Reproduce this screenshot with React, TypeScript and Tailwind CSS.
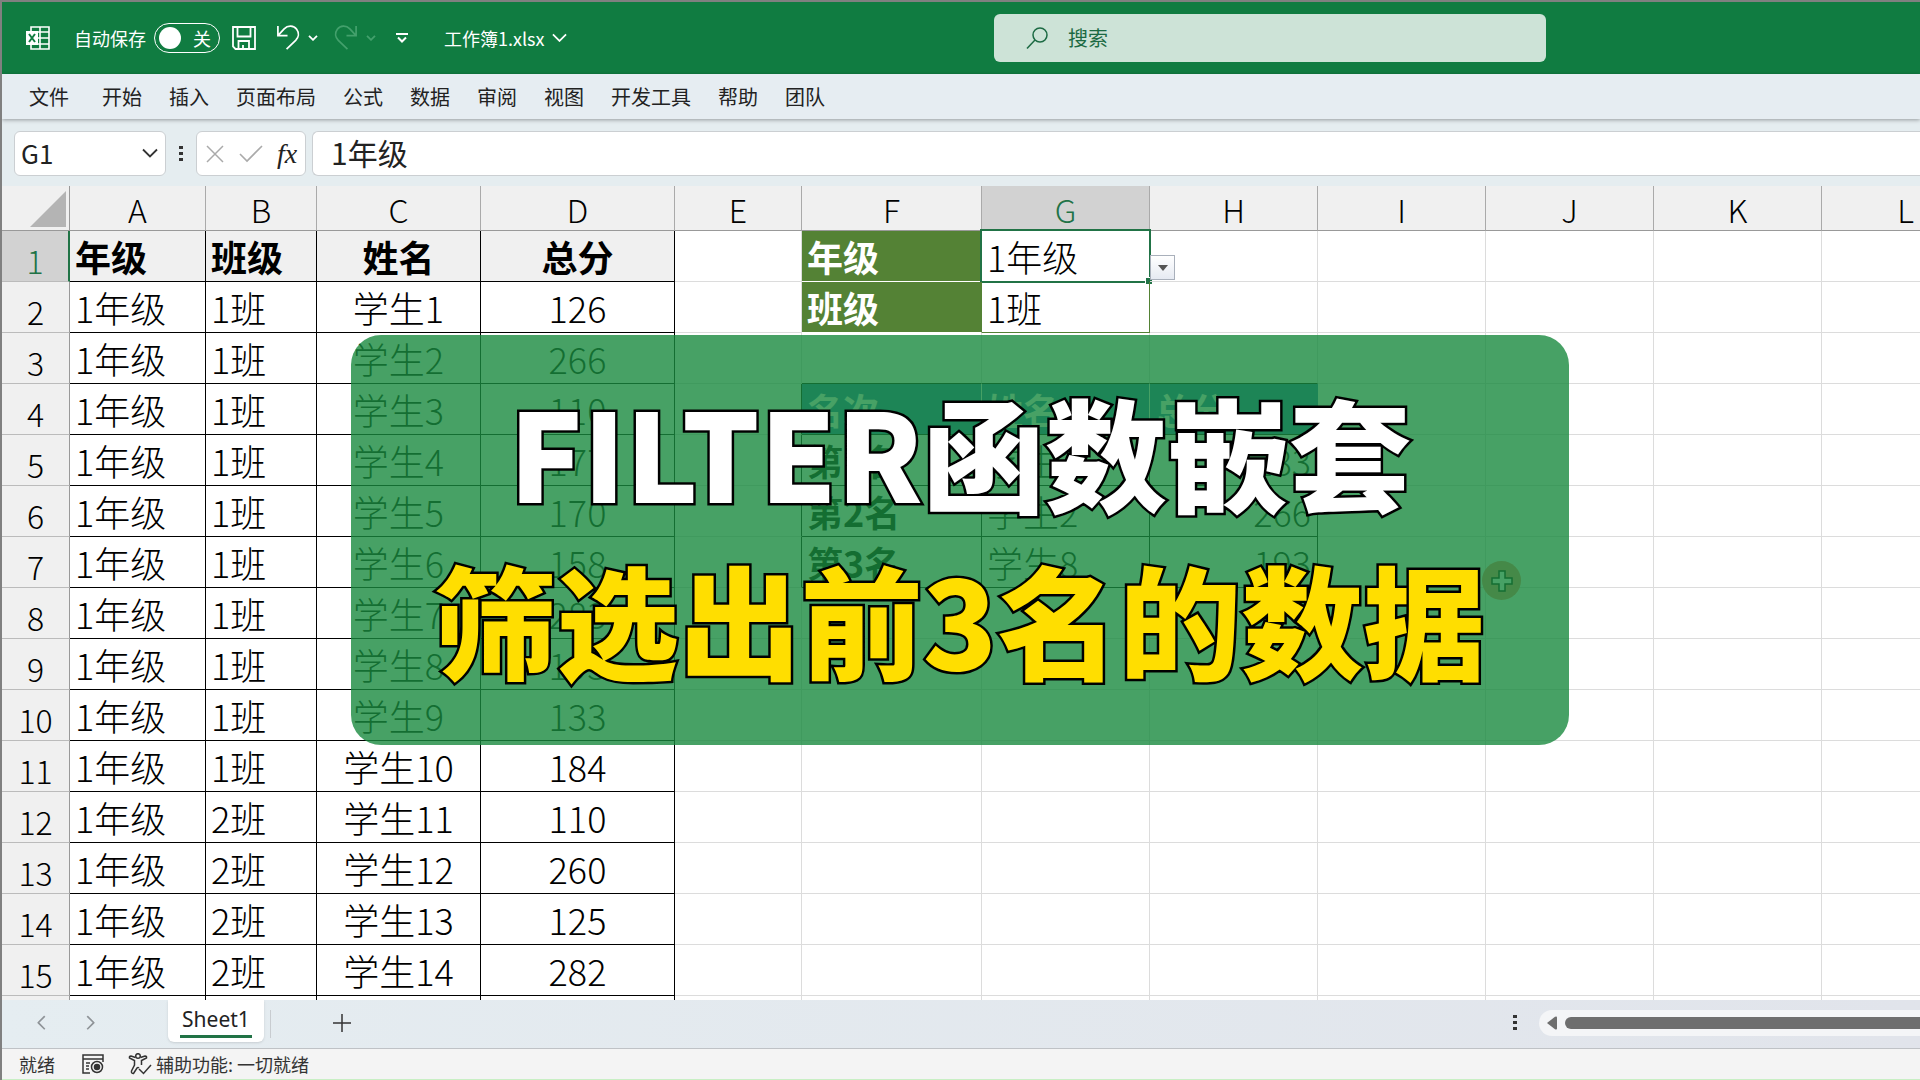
import React from "react";

const menuItems = ["开始", "插入", "页面布局", "公式", "数据", "审阅", "视图", "开发工具", "帮助", "团队"];
const columns = ["A", "B", "C", "D", "E", "F", "G", "H", "I", "J", "K", "L"];

const students = [
	["1年级", "1班", "学生1", "126"],
	["1年级", "1班", "学生2", "266"],
	["1年级", "1班", "学生3", "110"],
	["1年级", "1班", "学生4", "177"],
	["1年级", "1班", "学生5", "170"],
	["1年级", "1班", "学生6", "158"],
	["1年级", "1班", "学生7", "283"],
	["1年级", "1班", "学生8", "193"],
	["1年级", "1班", "学生9", "133"],
	["1年级", "1班", "学生10", "184"],
	["1年级", "2班", "学生11", "110"],
	["1年级", "2班", "学生12", "260"],
	["1年级", "2班", "学生13", "125"],
	["1年级", "2班", "学生14", "282"],
	["", "", "", ""],
];

const ranking: Record<number, string[]> = {
	5: ["第1名", "学生7", "283"],
	6: ["第2名", "学生2", "266"],
	7: ["第3名", "学生8", "193"],
};

type IconProps = { className?: string };

const ChevronDown: React.FC<IconProps> = ({ className }) => (
	<svg viewBox="0 0 16 10" className={className} fill="none" stroke="currentColor" strokeWidth="1.8">
		<path d="M1 1.5 8 8.5 15 1.5" />
	</svg>
);

const SmallChevron = () => (
	<svg viewBox="0 0 10 6" className="h-[6px] w-[10px]" fill="none" stroke="currentColor" strokeWidth="1.8">
		<path d="m1 .8 4 4 4-4" />
	</svg>
);

const ExcelIcon = () => (
	<svg viewBox="0 0 24 24" className="size-6 text-white" fill="none" stroke="currentColor" strokeWidth="1.6">
		<path d="M5 5V1h18v22H5v-4M14 1v22M5 6h18M12 12h11M5 18h18" />
		<path d="M0 5h12v14H0z" fill="currentColor" stroke="none" />
		<path d="m3 8 6 8M9 8l-6 8" stroke="#107c41" strokeWidth="2" />
	</svg>
);

const SaveIcon = () => (
	<svg viewBox="0 0 24 24" className="size-6" fill="none" stroke="currentColor" strokeWidth="1.8">
		<path d="M1 1h22v22H3.500L1 20.500z" />
		<path d="M5.500 1v9.500h13V1M6.500 23v-8h10.500v8M11 23v-4" />
	</svg>
);

const UndoIcon: React.FC<IconProps> = ({ className }) => (
	<svg viewBox="0 0 24 26" className={className} fill="none" stroke="currentColor" strokeWidth="1.8">
		<path d="M1.500 1v10h10M2 10.500 8 4C12 0 18 .5 21 4.500s2 8.500-1 11.500L10.500 25" />
	</svg>
);

const MoreDots = () => (
	<svg viewBox="0 0 4 16" className="h-4 w-1 shrink-0 text-[#333]" fill="currentColor">
		<path d="M0 0h4v3H0zM0 6h4v3H0zM0 12h4v3H0z" />
	</svg>
);

const TitleBar = () => (
	<header className="relative flex h-[72px] items-center bg-[#107c41] pb-px pl-6 text-lg text-white">
		<ExcelIcon />
		<label htmlFor="autosave" className="ml-6">自动保存</label>
		<button id="autosave" role="switch" aria-checked="false" className="ml-2 flex h-[30px] w-[66px] items-center justify-between rounded-full border border-white pl-1 pr-2">
			<span className="size-[22px] rounded-full bg-white"></span>
			关
		</button>
		<button aria-label="保存" className="ml-3"><SaveIcon /></button>
		<button aria-label="撤消" className="ml-5 flex items-center gap-2">
			<UndoIcon className="h-[25px] w-6" />
			<SmallChevron />
		</button>
		<button aria-label="恢复" className="ml-4 flex items-center gap-2 text-[#43a06c]">
			<UndoIcon className="h-[25px] w-6 -scale-x-100" />
			<SmallChevron />
		</button>
		<button aria-label="自定义" className="ml-5">
			<svg viewBox="0 0 12 10" className="h-[10px] w-3" fill="none" stroke="currentColor" strokeWidth="2">
				<path d="M0 1h12M2 4.500l4 4 4-4" />
			</svg>
		</button>
		<button className="ml-9 flex items-center gap-2">
			工作簿1.xlsx
			<ChevronDown className="w-[15px]" />
		</button>
		<div className="absolute left-1/2 ml-[33px] flex h-12 w-[552px] items-center gap-5 rounded-md bg-[#cde3d7] pl-8 text-xl text-[#1c6a43]">
			<svg viewBox="0 0 22 22" className="size-[22px] shrink-0" fill="none" stroke="currentColor" strokeWidth="1.5">
				<circle cx="14" cy="8" r="7" />
				<path d="M9 13 1 21.500" />
			</svg>
			<input aria-label="搜索" placeholder="搜索" className="w-full bg-transparent outline-none placeholder:text-[#1c6a43]" />
		</div>
	</header>
);

const MenuBar = () => (
	<nav className="relative flex h-[45px] items-center gap-[27px] bg-[#e6edf2] pl-[27px] text-xl text-[#222] shadow-[0_1px_4px_rgba(0,0,0,0.35)]">
		<button className="mr-[6px]">文件</button>
		{menuItems.map((item) => (
			<button key={item}>{item}</button>
		))}
	</nav>
);

const FormulaBar = () => (
	<div className="flex h-[67px] items-start bg-[#e5edf0] pl-3 pt-3">
		<div className="flex h-[45px] w-[152px] shrink-0 items-center rounded-md border border-[#cbcfd2] bg-white pr-[7px] pb-[2px] pl-[6px]">
			<input aria-label="名称框" defaultValue="G1" className="w-full min-w-0 text-[26px] leading-10 text-[#222] outline-none" />
			<ChevronDown className="w-4 shrink-0 text-[#333]" />
		</div>
		<div className="flex h-[45px] w-[30px] shrink-0 items-center justify-center"><MoreDots /></div>
		<div className="flex h-[45px] w-[110px] shrink-0 items-center rounded-md border border-[#cbcfd2] bg-white pl-[9px]">
			<svg viewBox="0 0 18 18" className="size-[18px] text-[#aaa]" fill="none" stroke="currentColor" strokeWidth="1.5">
				<path d="m1 1 16 16M17 1 1 17" />
			</svg>
			<svg viewBox="0 0 24 18" className="ml-[15px] h-[18px] w-6 text-[#aaa]" fill="none" stroke="currentColor" strokeWidth="1.6">
				<path d="m1 9 7 7L23 1" />
			</svg>
			<button aria-label="插入函数" className="ml-[14px] font-['Liberation_Serif',serif] text-[28px] leading-8 italic text-[#222]">fx</button>
		</div>
		<div className="ml-[6px] flex h-[45px] grow items-center rounded-l-md border border-r-0 border-[#cbcfd2] bg-white pb-[3px] pl-[18px]">
			<input aria-label="编辑栏" defaultValue="1年级" className="w-full text-[30px] leading-10 text-[#222] outline-none" />
		</div>
	</div>
);

const cellClass = (row: number, col: string) => {
	if ("ABCD".includes(col)) {
		const align = col === "A" || col === "B" ? "pl-[5px]" : "text-center";
		return `border-black ${align} ${row === 1 ? "bg-[#f0f0f0] font-bold" : ""}`;
	}
	if (col === "F" && row <= 2) return "bg-[#548235] border-r-[#548235] border-b-white pl-[5px] font-bold text-white";
	if (col === "G" && row <= 2) return "border-[#548235] pl-[5px]";
	if ("FGH".includes(col) && row === 4) {
		return `bg-[#2e75b6] border-b-black pl-[5px] font-bold text-white ${col === "H" ? "border-r-[#2e75b6]" : "border-r-white"}`;
	}
	if ("FGH".includes(col) && row >= 5 && row <= 7) {
		return `border-black ${col === "F" ? "pl-[5px] font-bold" : col === "G" ? "pl-[5px]" : "pr-[6px] text-right"}`;
	}
	if (col === "E" && row >= 4 && row <= 7) return "border-r-black border-b-[#dcdcdc]";
	if ("FGH".includes(col) && row === 3) return "border-b-black border-r-[#dcdcdc]";
	return "border-[#dcdcdc]";
};

const cellText = (row: number, col: string) => {
	const i = columns.indexOf(col);
	if (i < 4) return row === 1 ? ["年级", "班级", "姓名", "总分"][i] : students[row - 2][i];
	if (row === 1) return { F: "年级", G: "1年级" }[col] ?? "";
	if (row === 2) return { F: "班级", G: "1班" }[col] ?? "";
	if (row === 4) return { F: "名次", G: "姓名", H: "总分" }[col] ?? "";
	return ranking[row]?.[i - 5] ?? "";
};

const Selection = () => (
	<>
		<span className="absolute -inset-[2px] border-2 border-[#217346]"></span>
		<span className="absolute -right-[3px] -bottom-[3px] size-[6px] bg-[#217346] outline outline-white"></span>
		<button aria-label="选择" className="absolute -right-[26px] bottom-px flex h-[25px] w-[25px] items-center justify-center border border-[#a9b0bb] bg-linear-to-b from-white to-[#e6eaf2]">
			<svg viewBox="0 0 10 6" className="h-[6px] w-[10px]" fill="#555"><path d="M0 0h10L5 6z" /></svg>
		</button>
	</>
);

const Sheet = () => (
	<div className="h-[814px] overflow-hidden bg-white">
		<table className="w-[1988px] table-fixed border-separate border-spacing-0 text-4xl leading-[44px] font-light text-black">
			<colgroup>
				<col className="w-[68px]" />
				<col className="w-[136px]" />
				<col className="w-[111px]" />
				<col className="w-[164px]" />
				<col className="w-[194px]" />
				<col className="w-[127px]" />
				<col className="w-[180px]" />
				<col className="w-[168px]" span={6} />
			</colgroup>
			<thead>
				<tr className="h-[45px] text-[32px] leading-10">
					<th className="border-r border-b border-[#999] bg-[#f0f0f0] p-0">
						<svg viewBox="0 0 36 36" className="mt-px mr-[3px] ml-auto size-9" fill="#b4b4b4"><path d="M36 0v36H0z" /></svg>
					</th>
					{columns.map((col) => (
						<th key={col} className={`border-r border-b border-[#aaa] border-b-[#999] p-0 pt-px font-light ${col === "G" ? "bg-[#d2d2d2] text-[#217346]" : "bg-[#f0f0f0]"}`}>
							{col}
						</th>
					))}
				</tr>
			</thead>
			<tbody>
				{students.concat([[]]).map((_, index) => {
					const row = index + 1;
					return (
						<tr key={row} className="h-[51px]">
							<th className={`border-b p-0 pt-2 text-[32px] leading-10 font-light ${row === 1 ? "border-r-2 border-[#bbb] border-r-[#217346] bg-[#d2d2d2] text-[#217346]" : "border-r border-[#bbb] border-r-[#999] bg-[#f0f0f0]"}`}>
								{row < 16 ? row : ""}
							</th>
							{columns.map((col) => (
								<td key={col} className={`relative border-r border-b p-0 whitespace-nowrap ${cellClass(row, col)}`}>
									{row < 16 ? cellText(row, col) : ""}
									{row === 1 && col === "G" && <Selection />}
								</td>
							))}
						</tr>
					);
				})}
			</tbody>
		</table>
	</div>
);

const SheetTabs = () => (
	<div className="flex h-[49px] items-start border-b border-[#bfc2c6] bg-linear-to-r from-[#e5edf1] to-[#e1e4eb]">
		<div className="flex h-[46px] w-[166px] shrink-0 items-center gap-[34px] pl-8 text-[#8f9498]">
			<button aria-label="上一个"><ChevronDown className="w-[15px] rotate-90" /></button>
			<button aria-label="下一个"><ChevronDown className="w-[15px] -rotate-90" /></button>
		</div>
		<button className="flex h-[42px] w-24 flex-col items-center rounded-b-md bg-white pt-1 font-['Noto_Sans',sans-serif] text-[21px] leading-[30px] text-[#222] shadow-sm">
			Sheet1
			<span className="mt-px h-[3px] w-[72px] bg-[#217346]"></span>
		</button>
		<span className="mt-[10px] ml-[6px] h-7 w-px bg-[#c8ccd0]"></span>
		<button aria-label="新工作表" className="mt-[14px] ml-[62px] text-[#333]">
			<svg viewBox="0 0 18 18" className="size-[18px]" fill="none" stroke="currentColor" strokeWidth="1.5"><path d="M9 0v18M0 9h18" /></svg>
		</button>
		<div className="ml-auto flex h-[46px] items-center gap-[22px]">
			<MoreDots />
			<div className="flex h-[26px] w-[381px] items-center gap-2 rounded-l-full bg-[#f4f5f7] pl-2">
				<svg viewBox="0 0 10 14" className="h-[14px] w-[10px] shrink-0" fill="#6e6e6e"><path d="M0 7 8 .8Q10 0 10 1.500v11q0 1.500-2 .7z" /></svg>
				<div className="h-3 grow rounded-l-full bg-[#6e6e6e]"></div>
			</div>
		</div>
	</div>
);

const StatusBar = () => (
	<footer className="flex h-[31px] items-center border-b border-[#c8efc4] bg-[#f4f4f4] pl-[17px] text-lg text-[#333]">
		<span>就绪</span>
		<svg viewBox="0 0 22 20" className="ml-[27px] h-5 w-[22px]" fill="none" stroke="currentColor" strokeWidth="1.5">
			<path d="M8 19H1V1h20v7M1 5h20M4 9h4M4 12h3M4 15h3" />
			<circle cx="15" cy="13" r="5.500" />
			<circle cx="15" cy="13" r="2.500" fill="currentColor" />
		</svg>
		<svg viewBox="0 0 24 22" className="ml-6 h-[22px] w-6" fill="none" stroke="currentColor" strokeWidth="1.500">
			<circle cx="10" cy="3" r="2.300" />
			<path d="M7.500 4.500 3 3Q1 3 1.500 5L6.500 7.500V12L3.500 18q-.5 2.500 2 2.500L9 15q1-1 2 0M12.500 4.500 17 3q2 0 1.500 2L13.500 7.500V12M11 16l4.500 4.500L23 12" />
		</svg>
		<span className="ml-1">辅助功能: 一切就绪</span>
	</footer>
);

const Banner = () => (
	<div className="absolute inset-x-0 top-[333px] mr-[2px] flex justify-center">
		<div className="flex h-[410px] w-[1218px] flex-col items-center rounded-[30px] bg-[#19893e]/80 pt-[31px] text-[122px] leading-[167px] font-black whitespace-nowrap [-webkit-text-stroke:5px_#000] [paint-order:stroke_fill]">
			<h1 className="text-white">FILTER函数嵌套</h1>
			<h2 className="text-[#ffde00]">筛选出前3名的数据</h2>
		</div>
	</div>
);

const CellCursor = () => (
	<div className="absolute top-[559px] left-[1480px] flex size-[39px] items-center justify-center rounded-full bg-[#f5866e]">
		<svg viewBox="0 0 22 22" className="size-[22px]" fill="#fff" stroke="#000" strokeWidth="1.500"><path d="M8 1h6v7h7v6h-7v7H8v-7H1V8h7z" /></svg>
	</div>
);

export default function App() {
	return (
		<div className="relative overflow-hidden border-t-2 border-l-2 border-[#808080] font-['Noto_Sans_CJK_SC',sans-serif]">
			<TitleBar />
			<MenuBar />
			<FormulaBar />
			<Sheet />
			<SheetTabs />
			<StatusBar />
			<CellCursor />
			<Banner />
		</div>
	);
}
